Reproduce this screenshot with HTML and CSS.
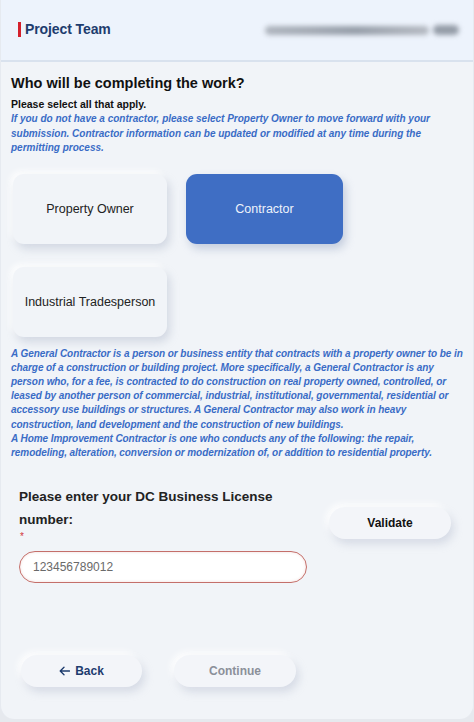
FILE: index.html
```html
<!DOCTYPE html>
<html lang="en">
<head>
<meta charset="utf-8">
<title>Project Team</title>
<link rel="stylesheet" href="styles.css">
</head>
<body>
<div class="card">
  <header class="topbar">
    <h1 class="brand"><span class="brand-mark"></span>Project Team</h1>
    <div class="blurred" aria-hidden="true"><span class="blur-a"></span><span class="blur-b"></span></div>
  </header>

  <main class="content">
    <h2 class="question">Who will be completing the work?</h2>
    <p class="select">Please select all that apply.</p>
    <p class="note">If you do not have a contractor, please select Property Owner to move forward with your submission. Contractor information can be updated or modified at any time during the permitting process.</p>

    <div class="options">
      <button class="option">Property Owner</button>
      <button class="option selected">Contractor</button>
      <button class="option">Industrial Tradesperson</button>
    </div>

    <p class="desc">A General Contractor is a person or business entity that contracts with a property owner to be in charge of a construction or building project. More specifically, a General Contractor is any person who, for a fee, is contracted to do construction on real property owned, controlled, or leased by another person of commercial, industrial, institutional, governmental, residential or accessory use buildings or structures. A General Contractor may also work in heavy construction, land development and the construction of new buildings.<br>A Home Improvement Contractor is one who conducts any of the following: the repair, remodeling, alteration, conversion or modernization of, or addition to residential property.</p>

    <section class="license">
      <div class="license-field">
        <label class="license-label" for="lic">Please enter your DC Business License number:</label>
        <div class="required">*</div>
        <input id="lic" class="license-input" type="text" placeholder="123456789012">
      </div>
      <button class="pill validate">Validate</button>
    </section>

    <nav class="actions">
      <button class="pill back"><svg class="arrow" width="11" height="10" viewBox="0 0 11 10" aria-hidden="true"><path d="M10.5 5H1.2M5 1.2L1.2 5L5 8.8" fill="none" stroke="currentColor" stroke-width="1.3" stroke-linecap="round" stroke-linejoin="round"/></svg>Back</button>
      <button class="pill continue">Continue</button>
    </nav>
  </main>
</div>
</body>
</html>
```
FILE: styles.css
```css
* { box-sizing: border-box; }

html, body {
  margin: 0;
  padding: 0;
}

body {
  background: #e6e9ee;
  font-family: "Liberation Sans", Arial, sans-serif;
  color: #1d1d1f;
  width: 474px;
  height: 722px;
  overflow: hidden;
}

.card {
  background: #f1f4f8;
  height: 719px;
  border-radius: 0 0 14px 14px;
  border-left: 1px solid #e6eaf0;
  border-right: 1px solid #e6eaf0;
  overflow: hidden;
}

.topbar {
  height: 62px;
  background: #edf3fc;
  border-bottom: 2px solid #d9e2ee;
  display: flex;
  align-items: center;
  justify-content: space-between;
  padding: 0 14px 2px 17px;
}

.brand {
  margin: 0;
  font-size: 14px;
  font-weight: 700;
  color: #1e3c6e;
  display: flex;
  align-items: center;
  gap: 4px;
  letter-spacing: -0.1px;
}

.brand-mark {
  width: 3px;
  height: 15px;
  background: #d4202c;
  display: inline-block;
}

.blurred {
  width: 194px;
  height: 12px;
  display: flex;
  gap: 4px;
  filter: blur(2.8px);
  margin-top: 2px;
}

.blur-a {
  flex: 1;
  height: 9px;
  margin-top: 2px;
  border-radius: 5px;
  background: linear-gradient(90deg, #aeb4bd 0%, #a2a9b3 30%, #959da8 55%, #a8aeb7 80%, #b4b9c1 100%);
}

.blur-b {
  width: 26px;
  height: 10px;
  margin-top: 1px;
  border-radius: 5px;
  background: #949ca7;
}

.content {
  padding: 11px 10px 0 10px;
}

.question {
  margin: 0;
  font-size: 14.5px;
  line-height: 20px;
  font-weight: 700;
  color: #111;
}

.select {
  margin: 4px 0 0;
  font-size: 10.5px;
  line-height: 14px;
  font-weight: 700;
  color: #111;
}

.note {
  margin: 1px 0 0;
  font-size: 10px;
  line-height: 14.5px;
  font-style: italic;
  font-weight: 700;
  color: #3a6cc6;
  padding-right: 8px;
}

.options {
  display: grid;
  grid-template-columns: 154px 157px;
  column-gap: 19px;
  row-gap: 23px;
  margin: 18px 0 0 2px;
}

.option {
  height: 70px;
  border: none;
  border-radius: 11px;
  background: #f1f4f8;
  box-shadow: 3px 5px 9px rgba(165, 175, 195, 0.4), -3px -3px 6px rgba(255, 255, 255, 0.9);
  font-family: inherit;
  font-size: 12.5px;
  color: #222;
  cursor: pointer;
}

.option.selected {
  background: #3f6ec4;
  color: #eef3fb;
  box-shadow: 3px 5px 9px rgba(145, 160, 190, 0.45);
}

.desc {
  margin: 10px -6px 0 0;
  font-size: 10px;
  line-height: 14.2px;
  font-style: italic;
  font-weight: 700;
  letter-spacing: -0.07px;
  color: #3a6cc6;
}

.license {
  display: flex;
  align-items: flex-start;
  gap: 22px;
  margin: 25px 0 0 8px;
}

.license-field {
  width: 288px;
}

.license-label {
  display: block;
  width: 288px;
  font-size: 13.5px;
  line-height: 23px;
  font-weight: 700;
  color: #222;
}

.required {
  color: #d2353a;
  font-size: 10px;
  line-height: 10px;
  height: 10px;
  padding-left: 1px;
  margin-top: 1px;
}

.license-input {
  display: block;
  width: 288px;
  height: 32px;
  margin-top: 9px;
  border: 1.5px solid #c46f6a;
  border-radius: 16px;
  background: #fff;
  padding: 0 13px;
  font-family: inherit;
  font-size: 12px;
  color: #333;
  outline: none;
  box-shadow: inset 0 0 3px rgba(196, 111, 106, 0.25);
}

.license-input::placeholder {
  color: #6a6a6a;
}

.pill {
  height: 32px;
  border: none;
  border-radius: 16px;
  background: #f3f5f9;
  box-shadow: 3px 5px 9px rgba(170, 180, 200, 0.38), -3px -3px 7px rgba(255, 255, 255, 0.95);
  font-family: inherit;
  font-size: 12px;
  font-weight: 700;
  cursor: pointer;
  display: flex;
  align-items: center;
  justify-content: center;
  gap: 5px;
}

.validate {
  width: 122px;
  margin-top: 22px;
  color: #111;
}

.actions {
  display: flex;
  gap: 32px;
  margin: 72px 0 0 10px;
}

.back {
  width: 121px;
  color: #1e3c6e;
}

.arrow {
  display: block;
}

.continue {
  width: 122px;
  color: #8b9099;
}
```
